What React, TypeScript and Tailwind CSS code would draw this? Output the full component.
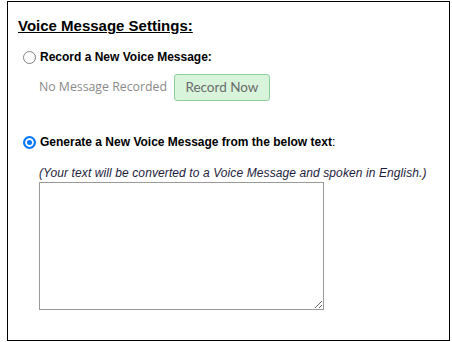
import React, { useState } from "react";

const radioCls =
    "m-0 mr-[4px] w-[13px] h-[13px] shrink-0 appearance-none rounded-full border-[1.5px] border-[#808080] bg-white checked:border-2 checked:border-[#0075ff] checked:bg-[#0075ff] checked:shadow-[inset_0_0_0_2px_white]";

const App: React.FC = () => {
    const [mode, setMode] = useState("generate");
    const [text, setText] = useState("");

    return (
        <div className="w-[452px] h-[342px] bg-white pt-[1px] pl-[7px]">
            <div
                className="w-[443px] h-[340px] border border-black pl-[10px] pt-[15px]"
                style={{ fontFamily: "Arial, 'Liberation Sans', sans-serif" }}
            >
                <h2 className="text-[15px] leading-[18px] font-bold underline text-black">
                    Voice Message Settings:
                </h2>

                <label className="flex items-center mt-[15px] ml-[5px] text-[12px] leading-[14px] font-bold text-black">
                    <input
                        type="radio"
                        name="vm"
                        className={radioCls}
                        checked={mode === "record"}
                        onChange={() => setMode("record")}
                    />
                    Record a New Voice Message:
                </label>

                <div className="flex items-center mt-[10px] ml-[21px]">
                    <span
                        className="text-[12.3px] text-[#8a8a8a]"
                        style={{ fontFamily: "'Open Sans', sans-serif" }}
                    >
                        No Message Recorded
                    </span>
                    <button
                        type="button"
                        className="ml-[7px] w-[96px] h-[27px] rounded-[3px] border border-[#8fcf9c] bg-[#d8f5dc] text-[13.5px] text-[#6b6b6b]"
                        style={{ fontFamily: "Lato, sans-serif" }}
                    >
                        Record Now
                    </button>
                </div>

                <label className="flex items-center mt-[34px] ml-[5px] text-[12px] leading-[14px] text-black">
                    <input
                        type="radio"
                        name="vm"
                        className={radioCls}
                        checked={mode === "generate"}
                        onChange={() => setMode("generate")}
                    />
                    <span className="font-bold">Generate a New Voice Message from the below text</span>:
                </label>

                <p className="mt-[17px] ml-[21px] text-[12px] leading-[14px] italic tracking-[0.1px] text-[#1c1c3c]">
                    (Your text will be converted to a Voice Message and spoken in English.)
                </p>

                <textarea
                    className="block mt-[2px] ml-[21px] w-[285px] h-[128px] border border-[#999] bg-white text-[12px] p-[2px]"
                    value={text}
                    onChange={(e) => setText(e.target.value)}
                />
            </div>
        </div>
    );
};

export default App;
